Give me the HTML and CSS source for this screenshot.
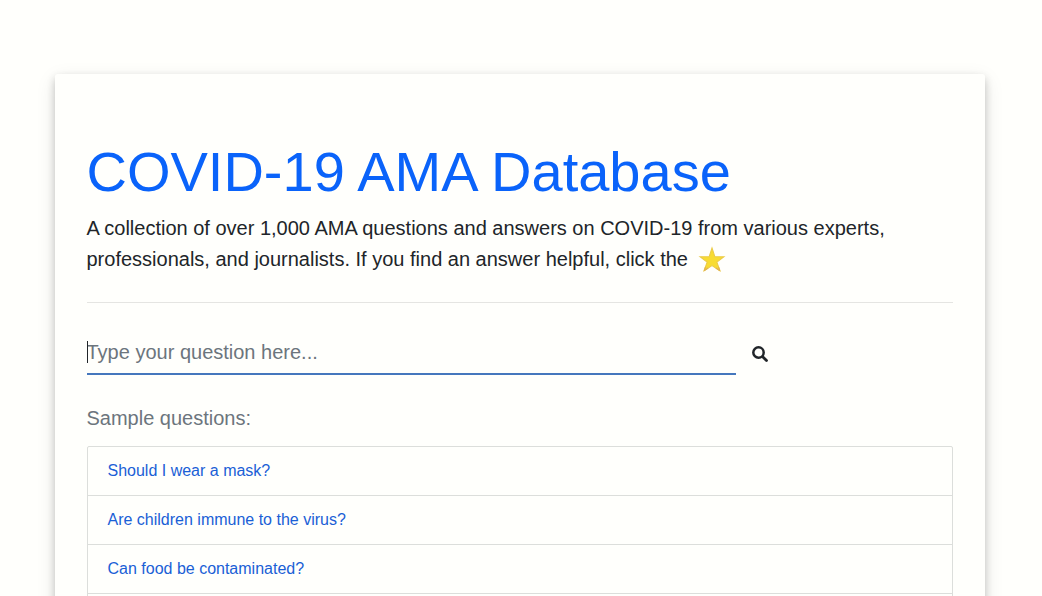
FILE: index.html
```html
<!DOCTYPE html>
<html lang="en">

<head>
    <meta charset="UTF-8">
    <meta name="viewport" content="width=device-width, initial-scale=1.0">
    <title>COVID-19 AMA Database</title>
    <link rel="stylesheet" href="styles.css">
</head>

<body>
    <main class="container">
        <h1 class="title">COVID-19 AMA Database</h1>
        <p class="lead">A collection of over 1,000 AMA questions and answers on COVID-19 from various experts, professionals, and journalists. If you find an answer helpful, click the
            <svg class="star" viewBox="0 1 24 24" aria-hidden="true">
                <path d="M12 1L14.600 9H23L16.500 14L19.300 22L12 17.200L4.700 22L7.500 14L1 9H9.400Z" fill="#f8dc32" stroke="#ebcb48" stroke-width="1"/>
                <path d="M19.300 22L18 18.500M4.700 22L6 18.500M19.300 22L15.500 19.500M4.700 22L8.500 19.500" fill="none" stroke="#e2b450" stroke-width="1"/>
            </svg>
        </p>
        <hr class="divider">

        <form class="search" onsubmit="return false">
            <div class="search-field">
                <input type="text" class="search-input" id="question" name="question" placeholder="Type your question here..." aria-label="Type your question here" autocomplete="off">
            </div>
            <button type="submit" class="search-button" aria-label="Search">
                <svg class="search-icon" viewBox="0 0 16 16" aria-hidden="true">
                    <circle cx="6.500" cy="6.500" r="5.200" fill="none" stroke="currentColor" stroke-width="2.500"/>
                    <path d="M10.700 10.700L14.500 14.500" stroke="currentColor" stroke-width="2.800" stroke-linecap="round"/>
                </svg>
            </button>
        </form>

        <p class="samples-label">Sample questions:</p>
        <div class="samples">
            <a href="#" class="sample">Should I wear a mask?</a>
            <a href="#" class="sample">Are children immune to the virus?</a>
            <a href="#" class="sample">Can food be contaminated?</a>
        </div>
    </main>
</body>

</html>
```

FILE: styles.css
```css
* {
    box-sizing: border-box;
}

body {
    margin: 0;
    padding: 74px 18px 0 15px;
    font-family: "Liberation Sans", Arial, sans-serif;
    font-size: 16px;
    line-height: 24px;
    color: #212529;
    background-color: #fffffc;
}

.container {
    max-width: 930px;
    margin: auto;
    padding: 64px 32px;
    border-radius: 3px;
    box-shadow: 0 4px 8px rgba(0, 0, 0, 0.2), 0 6px 20px rgba(0, 0, 0, 0.1);
}

.title {
    margin: 0 0 8px;
    font-size: 56px;
    font-weight: 400;
    line-height: 67px;
    color: #0a63fa;
}

.lead {
    margin: 0;
    font-size: 20px;
    line-height: 31px;
}

.star {
    width: 26px;
    height: 26px;
    margin: 0 5px;
    vertical-align: middle;
    overflow: visible;
}

.divider {
    margin: 27px 0 24px;
    border: 0;
    border-top: 1px solid #e5e5e2;
}

.search {
    display: flex;
    align-items: center;
}

.search-field {
    position: relative;
    width: 75%;
}

/* text cursor at the start of the field */
.search-field::before {
    content: "";
    position: absolute;
    top: 14px;
    left: 0;
    width: 1px;
    height: 22px;
    background: #212529;
}

.search-input {
    display: block;
    width: 100%;
    height: 48px;
    padding: 4px 0 0;
    border: 0;
    border-bottom: 2px solid #4577bd;
    border-radius: 0;
    outline: none;
    background: transparent;
    font-family: inherit;
    font-size: 20px;
    color: #212529;
}

.search-input::placeholder {
    color: #6c757d;
    opacity: 1;
}

.search-button {
    padding: 6px 16px 0;
    border: 0;
    background: none;
    color: #212529;
    cursor: pointer;
}

.search-icon {
    display: block;
    width: 16px;
    height: 16px;
}

.samples-label {
    margin: 28px 0 13px;
    font-size: 20px;
    line-height: 30px;
    color: #6c757d;
}

.samples {
    padding-bottom: 24px;
    border: 1px solid #dcdedb;
    border-radius: 2px;
}

.sample {
    display: block;
    padding: 12px 20px;
    border-bottom: 1px solid #dcdedb;
    color: #1a60d6;
    text-decoration: none;
}
```
